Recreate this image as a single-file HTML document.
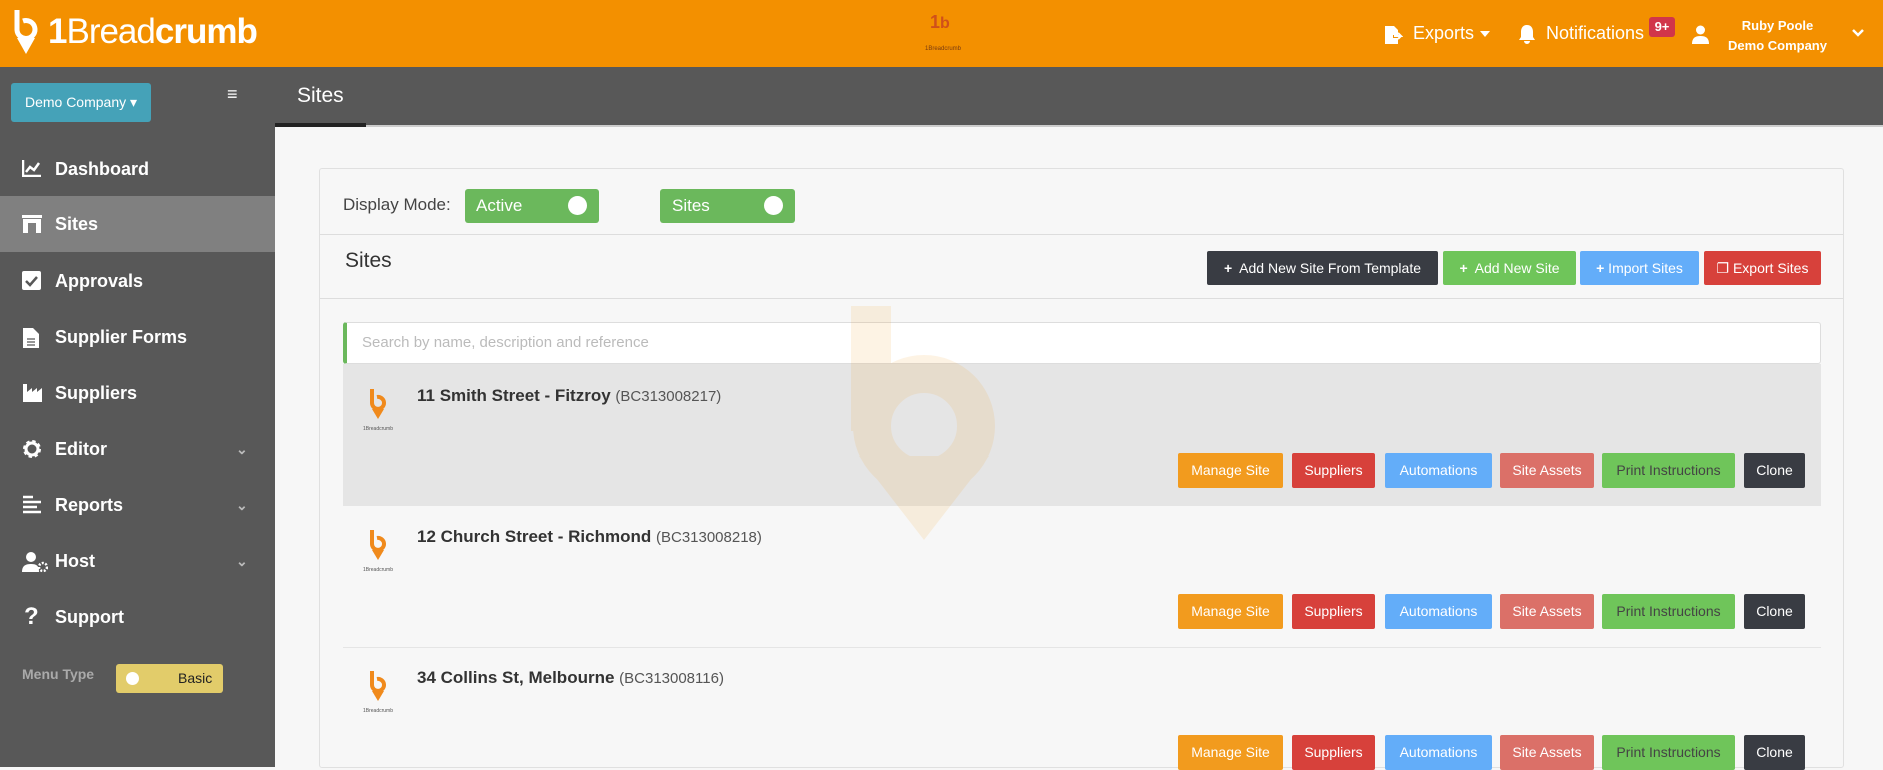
<!DOCTYPE html>
<html><head><meta charset="utf-8"><style>
*{box-sizing:border-box;margin:0;padding:0}
body{width:1883px;height:763px;overflow:hidden;position:relative;background:#f7f7f7;font-family:"Liberation Sans",sans-serif;}
.a{position:absolute}
.top{left:0;top:0;width:1883px;height:67px;background:#f39000}
.sub{left:275px;top:67px;width:1608px;height:60px;background:#585858;border-bottom:2px solid #ccc}
.side{left:0;top:67px;width:275px;height:700px;background:#585858}
.nav{position:absolute;left:0;width:275px;height:56px;color:#fff;font-weight:bold;font-size:18px;line-height:56px;padding-left:55px}
.nav svg{position:absolute;left:22px;top:18px}
.chev{position:absolute;left:236px;top:0;color:#bbb;font-size:14px}
.btn{position:absolute;color:#fff;font-size:14px;text-align:center;border-radius:2px}
.hb{top:251px;height:34px;line-height:34px}
.rb{height:35px;line-height:35px}
.title{position:absolute;left:417px;font-size:17px;font-weight:bold;color:#333}
.title span{font-weight:normal;font-size:15px;color:#555}
.logo{position:absolute;left:360px;width:36px;text-align:center}
</style></head><body>
<div class="a top"></div>
<svg class="a" style="left:9px;top:8px" width="34" height="48" viewBox="0 0 34 48"><path d="M8 2 L8 22 A9 9 0 1 0 14 13" fill="none" stroke="#fff" stroke-width="5"/><path d="M8 30 L17 46 L26 30Z" fill="#fff"/></svg>
<div class="a" style="left:48px;top:12px;color:#fff;font-size:35px;letter-spacing:-1px"><b>1</b>Bread<b>crumb</b></div>
<div class="a" style="left:930px;top:12px;color:#d0501a;font-size:18px;font-weight:bold">1<span style="font-size:16px">b</span></div>
<div class="a" style="left:925px;top:46px;color:#7a3b10;font-size:6px">1Breadcrumb</div>
<svg class="a" style="left:1383px;top:25px" width="20" height="20" viewBox="0 0 20 20"><path d="M2 1h9l4 4v5h-5v3h5v6H2z" fill="#fff"/><path d="M11 11h7l-3-3M18 11l-3 3" stroke="#fff" stroke-width="2" fill="none"/></svg>
<div class="a" style="left:1413px;top:23px;color:#fff;font-size:18px">Exports</div>
<div class="a" style="left:1480px;top:31px;border:5px solid transparent;border-top:6px solid #fff"></div>
<svg class="a" style="left:1518px;top:24px" width="18" height="20" viewBox="0 0 18 20"><path d="M9 1c4 0 6 3 6 7v5l2 3H1l2-3V8c0-4 2-7 6-7z M6 17h6a3 3 0 0 1-6 0z" fill="#fff"/></svg>
<div class="a" style="left:1546px;top:23px;color:#fff;font-size:18px">Notifications</div>
<div class="a" style="left:1649px;top:17px;width:26px;height:20px;background:#d1354a;border-radius:3px;color:#fff;font-size:13px;font-weight:bold;text-align:center;line-height:20px">9+</div>
<svg class="a" style="left:1692px;top:25px" width="17" height="20" viewBox="0 0 17 20"><circle cx="8.5" cy="5" r="4.5" fill="#fff"/><path d="M0 19c0-6 3-8 8.5-8s8.5 2 8.5 8z" fill="#fff"/></svg>
<div class="a" style="left:1710px;top:16px;width:135px;text-align:center;color:#fff;font-size:13px;font-weight:bold;line-height:20px">Ruby Poole<br>Demo Company</div>
<svg class="a" style="left:1852px;top:29px" width="12" height="9" viewBox="0 0 12 9"><path d="M1 1l5 5 5-5" stroke="#fff" stroke-width="2.5" fill="none"/></svg>

<div class="a sub"></div>
<div class="a side"></div>
<div class="a" style="left:11px;top:83px;width:140px;height:39px;background:#45a2b8;border-radius:3px;color:#fff;font-size:14px;line-height:39px;text-align:center">Demo Company ▾</div>
<div class="a" style="left:227px;top:84px;color:#fff;font-size:18px">≡</div>
<div class="a" style="left:297px;top:84px;color:#fff;font-size:21px">Sites</div>
<div class="a" style="left:275px;top:123px;width:91px;height:4px;background:#222"></div>

<div class="nav" style="top:141px"><svg width="20" height="18" viewBox="0 0 20 18"><path d="M1 1v16h18" stroke="#fff" stroke-width="2.5" fill="none"/><path d="M4 13l4-5 4 3 5-7" stroke="#fff" stroke-width="2.5" fill="none"/></svg>Dashboard</div>
<div class="nav" style="top:196px;background:#808080"><svg width="20" height="20" viewBox="0 0 20 20"><path d="M0 1h20v3H0zM1 5h18v14h-5V9H6v10H1z" fill="#fff"/></svg>Sites</div>
<div class="nav" style="top:253px"><svg width="20" height="20" viewBox="0 0 20 20"><rect x="0" y="0" width="19" height="19" rx="2" fill="#fff"/><path d="M4 10l4 4 7-8" stroke="#585858" stroke-width="2.5" fill="none"/></svg>Approvals</div>
<div class="nav" style="top:309px"><svg width="18" height="22" viewBox="0 0 18 22"><path d="M1 1h10l6 6v14H1z" fill="#fff"/><path d="M5 12h8M5 15h8M5 18h8" stroke="#585858" stroke-width="1.3"/></svg>Supplier Forms</div>
<div class="nav" style="top:365px"><svg width="22" height="20" viewBox="0 0 22 20"><path d="M1 1h4v8l5-4v4l5-4v4l5-4v14H1z" fill="#fff"/></svg>Suppliers</div>
<div class="nav" style="top:421px"><svg width="20" height="20" viewBox="0 0 20 20"><circle cx="10" cy="10" r="7" fill="none" stroke="#fff" stroke-width="4" stroke-dasharray="3 2.5"/><circle cx="10" cy="10" r="6" fill="none" stroke="#fff" stroke-width="3"/></svg>Editor<span class="chev">&#8964;</span></div>
<div class="nav" style="top:477px"><svg width="20" height="20" viewBox="0 0 20 20"><path d="M1 2h10M1 7h18M1 12h14M1 17h18" stroke="#fff" stroke-width="2.5"/></svg>Reports<span class="chev">&#8964;</span></div>
<div class="nav" style="top:533px"><svg width="26" height="22" viewBox="0 0 26 22"><circle cx="9" cy="6" r="5" fill="#fff"/><path d="M0 21c0-6 3-8 9-8s8 2 8 8z" fill="#fff"/><circle cx="21" cy="16" r="4" fill="none" stroke="#fff" stroke-width="2.5" stroke-dasharray="2 1.5"/></svg>Host<span class="chev">&#8964;</span></div>
<div class="nav" style="top:589px"><span style="position:absolute;left:24px;font-size:24px">?</span>Support</div>
<div class="a" style="left:22px;top:666px;color:#aaa;font-size:14px;font-weight:bold">Menu Type</div>
<div class="a" style="left:116px;top:664px;width:107px;height:29px;background:#e2cc6a;border-radius:3px"><div class="a" style="left:10px;top:8px;width:13px;height:13px;background:#fff;border-radius:50%"></div><div class="a" style="left:62px;top:6px;font-size:14px;color:#222">Basic</div></div>

<div class="a" style="left:319px;top:168px;width:1525px;height:600px;border:1px solid #e0e0e0;border-radius:3px;background:#f7f7f7"></div>
<div class="a" style="left:343px;top:195px;font-size:17px;color:#444">Display Mode:</div>
<div class="a" style="left:465px;top:189px;width:134px;height:34px;background:#6bb85c;border-radius:3px"><div class="a" style="left:11px;top:7px;color:#fff;font-size:17px">Active</div><div class="a" style="left:103px;top:7px;width:19px;height:19px;background:#fff;border-radius:50%"></div></div>
<div class="a" style="left:660px;top:189px;width:135px;height:34px;background:#6bb85c;border-radius:3px"><div class="a" style="left:12px;top:7px;color:#fff;font-size:17px">Sites</div><div class="a" style="left:104px;top:7px;width:19px;height:19px;background:#fff;border-radius:50%"></div></div>
<div class="a" style="left:320px;top:234px;width:1523px;height:1px;background:#ddd"></div>
<div class="a" style="left:345px;top:249px;font-size:21px;color:#333">Sites</div>
<div class="btn hb" style="left:1207px;width:231px;background:#393c43"><b>+</b>&nbsp; Add New Site From Template</div>
<div class="btn hb" style="left:1443px;width:133px;background:#6fc55a"><b>+</b>&nbsp; Add New Site</div>
<div class="btn hb" style="left:1580px;width:119px;background:#63adf9"><b>+</b> Import Sites</div>
<div class="btn hb" style="left:1704px;width:117px;background:#d7413b">&#10064; Export Sites</div>
<div class="a" style="left:320px;top:298px;width:1523px;height:1px;background:#ddd"></div>

<div class="a" style="left:343px;top:322px;width:1478px;height:42px;background:#fff;border:1px solid #ddd;border-left:4px solid #6bb85c;border-radius:3px;color:#bbb;font-size:15px;line-height:40px;padding-left:15px">Search by name, description and reference</div>

<div class="a" style="left:343px;top:364px;width:1478px;height:142px;background:#e5e5e5"></div>
<div class="a" style="left:343px;top:647px;width:1478px;height:1px;background:#e5e5e5"></div>

<svg class="a" style="left:829px;top:306px;opacity:.1" width="180" height="234" viewBox="0 0 180 234"><path d="M42 0V125" stroke="#f39000" stroke-width="40" fill="none"/><circle cx="95" cy="120" r="52" fill="none" stroke="#f39000" stroke-width="38"/><path d="M30 150l65 84 65-84z" fill="#f39000"/></svg>

<div class="logo" style="top:387px"><svg width="24" height="34" viewBox="0 0 24 34"><path d="M6 2v14a6 6 0 1 0 5-6" fill="none" stroke="#f08a1c" stroke-width="4"/><path d="M6 22l6 10 6-10z" fill="#f08a1c"/></svg><div style="font-size:5px;color:#555">1Breadcrumb</div></div>
<div class="title" style="top:386px">11 Smith Street - Fitzroy <span>(BC313008217)</span></div>
<div class="logo" style="top:528px"><svg width="24" height="34" viewBox="0 0 24 34"><path d="M6 2v14a6 6 0 1 0 5-6" fill="none" stroke="#f08a1c" stroke-width="4"/><path d="M6 22l6 10 6-10z" fill="#f08a1c"/></svg><div style="font-size:5px;color:#555">1Breadcrumb</div></div>
<div class="title" style="top:527px">12 Church Street - Richmond <span>(BC313008218)</span></div>
<div class="logo" style="top:669px"><svg width="24" height="34" viewBox="0 0 24 34"><path d="M6 2v14a6 6 0 1 0 5-6" fill="none" stroke="#f08a1c" stroke-width="4"/><path d="M6 22l6 10 6-10z" fill="#f08a1c"/></svg><div style="font-size:5px;color:#555">1Breadcrumb</div></div>
<div class="title" style="top:668px">34 Collins St, Melbourne <span>(BC313008116)</span></div>

<div class="a" style="left:0;top:453px">
<div class="btn rb" style="left:1178px;width:105px;background:#f29b1e">Manage Site</div>
<div class="btn rb" style="left:1292px;width:83px;background:#d7413b">Suppliers</div>
<div class="btn rb" style="left:1385px;width:107px;background:#63adf9">Automations</div>
<div class="btn rb" style="left:1500px;width:94px;background:#db7068">Site Assets</div>
<div class="btn rb" style="left:1602px;width:133px;background:#6fc55a;color:#444">Print Instructions</div>
<div class="btn rb" style="left:1744px;width:61px;background:#393c43">Clone</div>
</div>
<div class="a" style="left:0;top:594px">
<div class="btn rb" style="left:1178px;width:105px;background:#f29b1e">Manage Site</div>
<div class="btn rb" style="left:1292px;width:83px;background:#d7413b">Suppliers</div>
<div class="btn rb" style="left:1385px;width:107px;background:#63adf9">Automations</div>
<div class="btn rb" style="left:1500px;width:94px;background:#db7068">Site Assets</div>
<div class="btn rb" style="left:1602px;width:133px;background:#6fc55a;color:#444">Print Instructions</div>
<div class="btn rb" style="left:1744px;width:61px;background:#393c43">Clone</div>
</div>
<div class="a" style="left:0;top:735px">
<div class="btn rb" style="left:1178px;width:105px;background:#f29b1e">Manage Site</div>
<div class="btn rb" style="left:1292px;width:83px;background:#d7413b">Suppliers</div>
<div class="btn rb" style="left:1385px;width:107px;background:#63adf9">Automations</div>
<div class="btn rb" style="left:1500px;width:94px;background:#db7068">Site Assets</div>
<div class="btn rb" style="left:1602px;width:133px;background:#6fc55a;color:#444">Print Instructions</div>
<div class="btn rb" style="left:1744px;width:61px;background:#393c43">Clone</div>
</div>
</body></html>
